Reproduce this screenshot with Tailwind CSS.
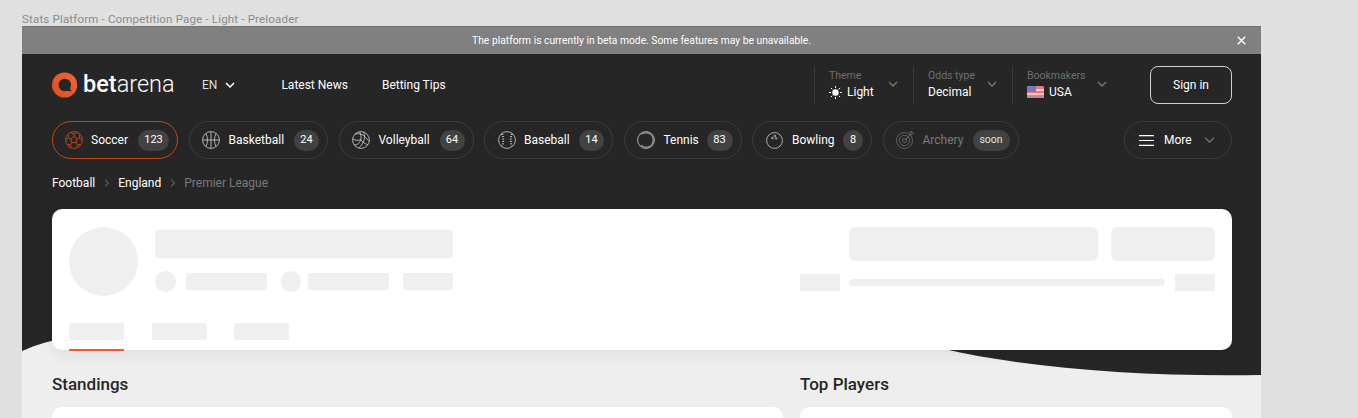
<!DOCTYPE html>
<html>
<head>
    <meta charset="utf-8">
    <title>Stats Platform - Competition Page - Light - Preloader</title>
    <script src="https://cdn.jsdelivr.net/npm/@tailwindcss/browser@4"></script>
</head>
<body class="bg-[#e0e0e0] h-[418px] overflow-hidden font-['Roboto',sans-serif]">
    <div class="pl-[22px] pt-[12px] h-[26px] text-[11.5px] leading-[14px] text-[#8a8a8a] tracking-[0.18px]">Stats Platform - Competition Page - Light - Preloader</div>

    <div class="relative w-[1239px] ml-[22px] h-[392px] bg-[#eeeeee] overflow-hidden">
        <!-- dark wave behind the header -->
        <svg class="absolute left-0 top-0" width="1239" height="392" viewBox="0 0 1239 392">
            <path d="M0 0H1239V349C1120 351 1005 342 922 323C700 284 560 278 300 300C180 310 70 294 0 325Z" fill="#262626"/>
        </svg>

        <div class="relative">
            <!-- beta banner -->
            <div class="h-[28px] bg-[#808080] flex items-center justify-center relative text-[10.3px] text-white border-t border-[#737373]">
                The platform is currently in beta mode. Some features may be unavailable.
                <svg class="absolute right-[15px] top-[9px]" width="9" height="9" viewBox="0 0 9 9"><path d="M.8.8l7.4 7.4M8.2.8L.8 8.2" stroke="#fff" stroke-width="1.4"/></svg>
            </div>

            <div class="pl-[30px] pr-[29px]">
                <!-- top nav -->
                <div class="h-[62px] flex items-center">
                    <div class="flex items-center w-[122px]">
                        <svg width="26" height="26" viewBox="0 0 26 26" class="shrink-0">
                            <defs><linearGradient id="logo" x1="1" y1="0" x2="0" y2="1"><stop offset="0" stop-color="#f4653a"/><stop offset="1" stop-color="#d9501f"/></linearGradient></defs>
                            <circle cx="12.6" cy="13" r="12.6" fill="url(#logo)"/>
                            <circle cx="12.8" cy="13" r="6.2" fill="#262626"/>
                            <path d="M14 18.500l5.500 1-1.800-4.500z" fill="#262626"/>
                        </svg>
                        <span class="ml-[5px] text-[23.5px] leading-none text-white font-medium">bet</span><span class="text-[23.5px] leading-none text-white font-light">arena</span>
                    </div>
                    <div class="ml-[28px] flex items-center gap-[8px] text-[12px] text-[#dddddd]">
                        EN
                        <svg width="10" height="6" viewBox="0 0 10 6"><path d="M1 1l4 4 4-4" stroke="#fff" stroke-width="1.5" fill="none"/></svg>
                    </div>
                    <a class="ml-[46px] text-[12px] text-white">Latest News</a>
                    <a class="ml-[34px] text-[12px] text-white">Betting Tips</a>

                    <div class="ml-auto flex items-center">
                        <div class="w-[99px] h-[38px] border-l border-[#3a3a3a] pl-[14px] pt-[2px] flex">
                            <div class="w-[59px]">
                                <div class="text-[10.5px] leading-[14px] text-[#6f6f6f] mt-[1px]">Theme</div>
                                <div class="flex items-center gap-[5px] text-[12px] leading-[18px] text-white">
                                    <svg width="13" height="13" viewBox="0 0 13 13"><circle cx="6.5" cy="6.5" r="3.2" fill="#fff"/><path d="M6.5 0v2M6.5 11v2M0 6.500h2M11 6.500h2M1.900 1.900l1.400 1.400M9.700 9.700l1.400 1.400M1.900 11.100l1.400-1.400M9.700 3.300l1.400-1.400" stroke="#fff" stroke-width="1"/></svg>
                                    Light
                                </div>
                            </div>
                            <svg class="mt-[13px]" width="10" height="6" viewBox="0 0 10 6"><path d="M1 1l4 4 4-4" stroke="#7a7a7a" stroke-width="1.3" fill="none"/></svg>
                        </div>
                        <div class="w-[99px] h-[38px] border-l border-[#3a3a3a] pl-[14px] pt-[2px] flex">
                            <div class="w-[59px]">
                                <div class="text-[10.5px] leading-[14px] text-[#6f6f6f] mt-[1px]">Odds type</div>
                                <div class="text-[12px] leading-[18px] text-white">Decimal</div>
                            </div>
                            <svg class="mt-[13px]" width="10" height="6" viewBox="0 0 10 6"><path d="M1 1l4 4 4-4" stroke="#7a7a7a" stroke-width="1.3" fill="none"/></svg>
                        </div>
                        <div class="w-[138px] h-[38px] border-l border-[#3a3a3a] pl-[14px] pt-[2px] flex">
                            <div class="w-[70px]">
                                <div class="text-[10.5px] leading-[14px] text-[#6f6f6f] mt-[1px]">Bookmakers</div>
                                <div class="flex items-center gap-[5px] text-[12px] leading-[18px] text-white">
                                    <svg width="17" height="12" viewBox="0 0 17 12"><rect width="17" height="12" rx="1.5" fill="#ee7a7e"/><rect y="3" width="17" height="2" fill="#f6c3c4"/><rect y="7" width="17" height="2" fill="#f6c3c4"/><rect y="10.500" width="17" height="1.500" fill="#8c93c0"/><rect width="9" height="6" fill="#6f7cc0"/></svg>
                                    USA
                                </div>
                            </div>
                            <svg class="mt-[13px]" width="10" height="6" viewBox="0 0 10 6"><path d="M1 1l4 4 4-4" stroke="#7a7a7a" stroke-width="1.3" fill="none"/></svg>
                        </div>
                        <button class="w-[82px] h-[38px] border border-[#cfcfcf] rounded-[8px] text-[12px] text-white">Sign in</button>
                    </div>
                </div>

                <!-- sports -->
                <div class="flex items-center gap-[10.500px] h-[38px] mt-[5px] text-[12px] text-white">
                    <div class="h-[38px] w-[126px] rounded-full border border-[#c8451c] flex items-center pl-[12px] pr-[8px]">
                        <svg width="18" height="18" viewBox="0 0 18 18" fill="none" stroke="#c8451c" stroke-width=".9"><circle cx="9" cy="9" r="8.4"/><path d="M9 5.600l3.200 2.300-1.200 3.700H7L5.800 7.900zM9 5.600V3L5.500 1.400M9 3l3.500-1.600M12.200 7.900l2.500-.8 2.500 2M14.700 7.100l-.2-3.600M11 11.600l1.500 2.200-.6 3M12.500 13.800l3.400-.4M7 11.600l-1.500 2.200.6 3M5.500 13.800l-3.400-.4M5.800 7.900l-2.500-.8-2.500 2M3.300 7.100l.2-3.600"/></svg>
                        <span class="ml-[8px]">Soccer</span>
                        <span class="ml-auto h-[21px] w-[31px] rounded-full bg-[#424242] flex items-center justify-center text-[11px]">123</span>
                    </div>
                    <div class="h-[38px] w-[139.500px] rounded-full border border-[#3d3d3d] flex items-center pl-[12.500px] pr-[8px]">
                        <svg width="18" height="18" viewBox="0 0 18 18" fill="none" stroke="#d0d0d0" stroke-width=".8"><circle cx="9" cy="9" r="8.400"/><path d="M9 .6v16.800M.6 9h16.800M4 2.400c2 4 2 9.200 0 13.200M14 2.400c-2 4-2 9.200 0 13.200"/></svg>
                        <span class="ml-[8.500px]">Basketball</span>
                        <span class="ml-auto h-[21px] w-[25px] rounded-full bg-[#424242] flex items-center justify-center text-[11px]">24</span>
                    </div>
                    <div class="h-[38px] w-[135px] rounded-full border border-[#3d3d3d] flex items-center pl-[12.500px] pr-[8px]">
                        <svg width="18" height="18" viewBox="0 0 18 18" fill="none" stroke="#d0d0d0" stroke-width=".8"><circle cx="9" cy="9" r="8.400"/><path d="M8.800 8.800C9.300 6 9 3 7.600.8M8.800 8.800C6 9.800 3 9.400.8 7.800M8.800 8.800c1.700 2.300 4 4 7 4.800M3 3c3-1 7-.2 9.800 2.600 1.700 1.700 3 3.500 4.400 4.400M11.600 1.200c1.600 3.600 1 8.400-1.400 11.800-1 1.500-2.200 3-3.400 4M2.200 13.400c1.800.8 4.400.6 6.600-4.600"/></svg>
                        <span class="ml-[8.500px]">Volleyball</span>
                        <span class="ml-auto h-[21px] w-[25px] rounded-full bg-[#424242] flex items-center justify-center text-[11px]">64</span>
                    </div>
                    <div class="h-[38px] w-[129px] rounded-full border border-[#3d3d3d] flex items-center pl-[12.500px] pr-[8px]">
                        <svg width="18" height="18" viewBox="0 0 18 18" fill="none" stroke="#d0d0d0" stroke-width=".8"><circle cx="9" cy="9" r="8.400"/><path d="M4.200 2.800c1.400 4 1.400 8.400 0 12.400M13.800 2.800c-1.400 4-1.400 8.400 0 12.400" stroke-width="1.800" stroke-dasharray="1 1.400"/></svg>
                        <span class="ml-[8.500px]">Baseball</span>
                        <span class="ml-auto h-[21px] w-[25px] rounded-full bg-[#424242] flex items-center justify-center text-[11px]">14</span>
                    </div>
                    <div class="h-[38px] w-[118px] rounded-full border border-[#3d3d3d] flex items-center pl-[12.500px] pr-[8px]">
                        <svg width="18" height="18" viewBox="0 0 18 18" fill="none" stroke="#d0d0d0" stroke-width=".8"><circle cx="9" cy="9" r="8.400"/><path d="M3.800 3.400c4-2.600 9.600-1.800 11.600 2.200 2 4.200-.2 9.400-4.800 10.400-2.800.6-5.200-.4-6.600-2"/></svg>
                        <span class="ml-[8.500px]">Tennis</span>
                        <span class="ml-auto h-[21px] w-[26px] rounded-full bg-[#424242] flex items-center justify-center text-[11px]">83</span>
                    </div>
                    <div class="h-[38px] w-[120px] rounded-full border border-[#3d3d3d] flex items-center pl-[13px] pr-[8px]">
                        <svg width="17" height="17" viewBox="0 0 17 17" fill="none" stroke="#d0d0d0" stroke-width=".8"><circle cx="8.500" cy="8.500" r="7.900"/><circle cx="8.800" cy="4" r=".8"/><circle cx="6.400" cy="6" r=".8"/><circle cx="10.200" cy="6.400" r=".8"/></svg>
                        <span class="ml-[9px]">Bowling</span>
                        <span class="ml-auto h-[21px] w-[20px] rounded-full bg-[#424242] flex items-center justify-center text-[11px]">8</span>
                    </div>
                    <div class="h-[38px] w-[136.500px] rounded-full border border-[#3d3d3d] flex items-center pl-[12.500px] pr-[8.500px]">
                        <svg width="18" height="18" viewBox="0 0 18 18" fill="none" stroke="#6f6f6f" stroke-width=".8"><circle cx="8.500" cy="9.500" r="8"/><circle cx="8.500" cy="9.500" r="5.200"/><circle cx="8.500" cy="9.500" r="2.200"/><path d="M8.500 9.500L15.500 2.500M14 2.500V1l2-.5v1.500L17.500 2 16 3.500h-1.500z"/></svg>
                        <span class="ml-[8.500px] text-[#7a7a7a]">Archery</span>
                        <span class="ml-auto h-[21px] w-[37px] rounded-full bg-[#424242] flex items-center justify-center text-[10.500px] text-[#e0e0e0]">soon</span>
                    </div>
                    <div class="ml-auto h-[38px] w-[108px] rounded-full border border-[#3d3d3d] flex items-center pl-[14px]">
                        <svg width="15" height="11" viewBox="0 0 15 11"><path d="M0 .7h15M0 5.500h15M0 10.300h15" stroke="#fff" stroke-width="1.200"/></svg>
                        <span class="ml-[10px]">More</span>
                        <svg class="ml-[12px]" width="11" height="6" viewBox="0 0 11 6"><path d="M1 .7l4.500 4.500L10 .7" stroke="#7a7a7a" stroke-width="1.200" fill="none"/></svg>
                    </div>
                </div>

                <!-- breadcrumbs -->
                <div class="flex items-center h-[16px] mt-[16px] text-[12px] text-white">
                    <span>Football</span>
                    <svg class="mx-[8.500px]" width="6" height="8" viewBox="0 0 6 8"><path d="M1 .7L4.500 4 1 7.300" stroke="#7a7a7a" fill="none"/></svg>
                    <span>England</span>
                    <svg class="mx-[8.500px]" width="6" height="8" viewBox="0 0 6 8"><path d="M1 .7L4.500 4 1 7.300" stroke="#7a7a7a" fill="none"/></svg>
                    <span class="text-[#7a7a7a]">Premier League</span>
                </div>

                <!-- competition card preloader -->
                <div class="mt-[18px] h-[141px] bg-white rounded-[10px] pl-[17px] pr-[17.500px] pt-[18px] shadow-[0_4px_16px_rgba(0,0,0,0.07)]">
                    <div class="flex h-[95px]">
                        <div class="w-[69px] h-[69px] rounded-full bg-[#efefef]"></div>
                        <div class="ml-[17px] w-[298px] pt-[3px]">
                            <div class="h-[28px] rounded-[2px] bg-[#efefef]"></div>
                            <div class="flex items-center mt-[13px]">
                                <div class="w-[20.500px] h-[20.500px] rounded-full bg-[#efefef]"></div>
                                <div class="ml-[10.500px] w-[81px] h-[17px] rounded-[2px] bg-[#efefef]"></div>
                                <div class="ml-[13.500px] w-[20.500px] h-[20.500px] rounded-full bg-[#efefef]"></div>
                                <div class="ml-[7px] w-[81px] h-[17px] rounded-[2px] bg-[#efefef]"></div>
                                <div class="ml-[14px] w-[50px] h-[17px] rounded-[2px] bg-[#efefef]"></div>
                            </div>
                        </div>
                        <div class="ml-auto w-[414.500px]">
                            <div class="flex justify-end gap-[13px]">
                                <div class="w-[249px] h-[34px] rounded-[6px] bg-[#efefef]"></div>
                                <div class="w-[103.500px] h-[34px] rounded-[6px] bg-[#efefef]"></div>
                            </div>
                            <div class="flex items-center mt-[13px]">
                                <div class="w-[40px] h-[17px] bg-[#efefef]"></div>
                                <div class="ml-[9px] flex-1 h-[7px] rounded-full bg-[#efefef]"></div>
                                <div class="ml-[10px] w-[39.500px] h-[17px] bg-[#efefef]"></div>
                            </div>
                        </div>
                    </div>
                    <div class="flex gap-[27.500px] mt-[1px]">
                        <div class="w-[55px] h-[28px] border-b-2 border-[#f0592a]">
                            <div class="w-[55px] h-[17px] rounded-[2px] bg-[#efefef]"></div>
                        </div>
                        <div class="w-[55px] h-[17px] rounded-[2px] bg-[#efefef]"></div>
                        <div class="w-[55px] h-[17px] rounded-[2px] bg-[#efefef]"></div>
                    </div>
                </div>

                <!-- sections -->
                <div class="grid grid-cols-[731px_432px] gap-[17px] mt-[24px]">
                    <div>
                        <h2 class="text-[17px] leading-[21px] font-medium text-[#262626]">Standings</h2>
                        <div class="mt-[12px] h-[40px] bg-white rounded-[10px]"></div>
                    </div>
                    <div>
                        <h2 class="text-[17px] leading-[21px] font-medium text-[#262626]">Top Players</h2>
                        <div class="mt-[12px] h-[40px] bg-white rounded-[10px]"></div>
                    </div>
                </div>
            </div>
        </div>
    </div>
</body>
</html>
